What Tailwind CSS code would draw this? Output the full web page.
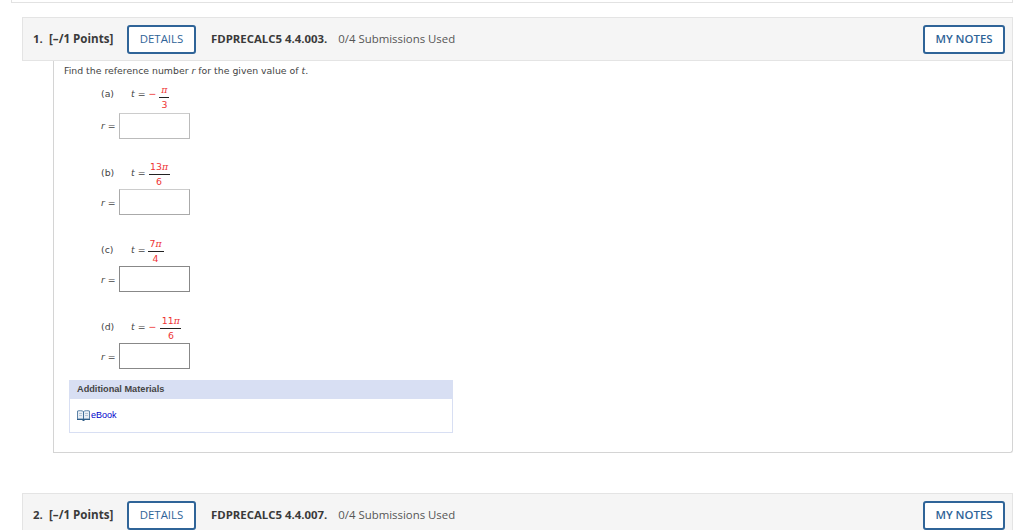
<!DOCTYPE html>
<html><head><meta charset="utf-8"><script src="https://cdn.jsdelivr.net/npm/@tailwindcss/browser@4"></script></head>
<body class="bg-white overflow-hidden">
<div class="w-[1024px] h-[530px] overflow-hidden flex flex-col text-[#333] font-['Open_Sans',sans-serif]">
  <div class="ml-[11px] mr-[11px] h-[3px] border border-t-0 border-[#e2e2e2] shrink-0"></div>
  <div class="h-[14px] shrink-0"></div>

  <div class="ml-[22px] mr-[11px] h-[44px] shrink-0 bg-[#f5f5f5] border border-[#e4e4e4] flex items-center pl-[10px] pr-[7px] text-[11.4px]">
    <span class="font-bold text-[#3a3a3a] w-[12px] pb-[1px]">1.</span>
    <span class="font-bold text-[#3a3a3a] ml-[4px] w-[66px] whitespace-nowrap text-[11.6px] pb-[1px]">[–/1 Points]</span>
    <span class="ml-[12px] w-[69px] h-[29px] flex items-center justify-center border-2 border-[#2f6498] rounded-[3px] bg-white text-[#2f6498] pb-[1px]">DETAILS</span>
    <span class="ml-[15px] font-bold text-[#3a3a3a] whitespace-nowrap pb-[1px]">FDPRECALC5 4.4.003.</span>
    <span class="ml-[11px] text-[#555] whitespace-nowrap pb-[1px]">0/4 Submissions Used</span>
    <span class="ml-auto w-[82px] h-[29px] flex items-center justify-center border-2 border-[#2f6498] rounded-[3px] bg-white text-[#2f6498] font-semibold pb-[1px]">MY NOTES</span>
  </div>

  <div class="ml-[53px] mr-[11px] h-[392px] shrink-0 border-l border-r border-b border-[#d4d4d4] rounded-br-[3px] pl-[10px] font-['DejaVu_Sans',sans-serif] text-[9.35px] text-[#444]">
    <p class="pt-[4px] h-[21px] leading-[11px]">Find the reference number <i>r</i> for the given value of <i>t</i>.</p>

    <div class="flex flex-col">
      <div class="h-[31px] flex items-start pt-[1px] pl-[37px]">
        <span class="w-[30px] mt-[4px] leading-[14px]">(a)</span><i class="mt-[4px] leading-[14px]">t</i><span class="ml-[3px] mt-[4px] leading-[14px]">=</span><span class="ml-[3px] mt-[4px] leading-[14px] text-[#e33]">−</span>
        <span class="ml-[3px] w-[10px] flex flex-col items-center text-[#e33] leading-[14px]"><i class="font-['DejaVu_Serif',serif]">π</i><span class="w-full border-t border-[#222] text-center">3</span></span>
      </div>
      <div class="h-[26px] flex items-center pl-[37px]">
        <span class="w-[18px] pt-[1px]"><i>r</i> =</span>
        <span class="block w-[71px] h-[26px] border border-[#bbb] border-t-[#ccc] bg-white"></span>
      </div>
    </div>

    <div class="flex flex-col mt-[16px]">
      <div class="h-[34px] flex items-start pt-[5px] pl-[37px]">
        <span class="w-[30px] mt-[6px] leading-[14px]">(b)</span><i class="mt-[6px] leading-[14px]">t</i><span class="ml-[3px] mt-[6px] leading-[14px]">=</span>
        <span class="ml-[3px] w-[21px] flex flex-col items-center text-[#e33] leading-[14px]"><span>13<i class="font-['DejaVu_Serif',serif]">π</i></span><span class="w-full border-t border-[#222] text-center">6</span></span>
      </div>
      <div class="h-[26px] flex items-center pl-[37px]">
        <span class="w-[18px] pt-[3px]"><i>r</i> =</span>
        <span class="block w-[71px] h-[26px] border border-[#aaa] border-t-[#ccc] bg-white"></span>
      </div>
    </div>

    <div class="flex flex-col mt-[17px]">
      <div class="h-[34px] flex items-start pt-[5px] pl-[37px]">
        <span class="w-[30px] mt-[6px] leading-[14px]">(c)</span><i class="mt-[6px] leading-[14px]">t</i><span class="ml-[3px] mt-[6px] leading-[14px]">=</span>
        <span class="ml-[2px] w-[16px] flex flex-col items-center text-[#e33] leading-[14px]"><span>7<i class="font-['DejaVu_Serif',serif]">π</i></span><span class="w-full border-t border-[#222] text-center">4</span></span>
      </div>
      <div class="h-[26px] flex items-center pl-[37px]">
        <span class="w-[18px] pt-[3px]"><i>r</i> =</span>
        <span class="block w-[71px] h-[26px] border border-[#888] bg-white"></span>
      </div>
    </div>

    <div class="flex flex-col mt-[17px]">
      <div class="h-[34px] flex items-start pt-[5px] pl-[37px]">
        <span class="w-[30px] mt-[6px] leading-[14px]">(d)</span><i class="mt-[6px] leading-[14px]">t</i><span class="ml-[3px] mt-[6px] leading-[14px]">=</span><span class="ml-[3px] mt-[6px] leading-[14px] text-[#e33]">−</span>
        <span class="ml-[4px] w-[21px] flex flex-col items-center text-[#e33] leading-[14px]"><span>11<i class="font-['DejaVu_Serif',serif]">π</i></span><span class="w-full border-t border-[#222] text-center">6</span></span>
      </div>
      <div class="h-[26px] flex items-center pl-[37px]">
        <span class="w-[18px] pt-[3px]"><i>r</i> =</span>
        <span class="block w-[71px] h-[26px] border border-[#888] bg-white"></span>
      </div>
    </div>

    <div class="ml-[5px] mt-[11px] w-[384px] h-[53px] border border-[#d8dff3] font-['Liberation_Sans',sans-serif]">
      <div class="h-[19px] -mx-px -mt-px bg-[#d8dff3] flex items-center pl-[8px] pt-[1px] font-bold text-[9.2px] text-[#444]">Additional Materials</div>
      <div class="flex items-center pl-[7px] pt-[11px] text-[9px] text-[#0000cc] leading-[11px]">
        <svg width="13" height="11" viewBox="0 0 13 11" class="shrink-0"><path d="M0.5 1C2.500 0.500 5 0.500 6.500 1.500C8 0.500 10.500 0.500 12.500 1V9H0.500Z" fill="#e8eef5" stroke="#5d84a8"/><path d="M6.500 1.500V9" stroke="#3f6d97"/><path d="M0 9H13V10H7.500V11H5.500V10H0Z" fill="#2f5d88"/><path d="M2 3.500H5M2 5.500H5M8 3.500H11M8 5.500H11" stroke="#b5c5d6"/></svg>
        <span class="ml-[1px]">eBook</span>
      </div>
    </div>
  </div>

  <div class="h-[40px] shrink-0"></div>

  <div class="ml-[22px] mr-[11px] h-[44px] shrink-0 bg-[#f5f5f5] border border-[#e4e4e4] flex items-center pl-[10px] pr-[7px] text-[11.4px]">
    <span class="font-bold text-[#3a3a3a] w-[12px] pb-[1px]">2.</span>
    <span class="font-bold text-[#3a3a3a] ml-[4px] w-[66px] whitespace-nowrap text-[11.6px] pb-[1px]">[–/1 Points]</span>
    <span class="ml-[12px] w-[69px] h-[29px] flex items-center justify-center border-2 border-[#2f6498] rounded-[3px] bg-white text-[#2f6498] pb-[1px]">DETAILS</span>
    <span class="ml-[15px] font-bold text-[#3a3a3a] whitespace-nowrap pb-[1px]">FDPRECALC5 4.4.007.</span>
    <span class="ml-[11px] text-[#555] whitespace-nowrap pb-[1px]">0/4 Submissions Used</span>
    <span class="ml-auto w-[82px] h-[29px] flex items-center justify-center border-2 border-[#2f6498] rounded-[3px] bg-white text-[#2f6498] font-semibold pb-[1px]">MY NOTES</span>
  </div>
</div>
</body></html>
